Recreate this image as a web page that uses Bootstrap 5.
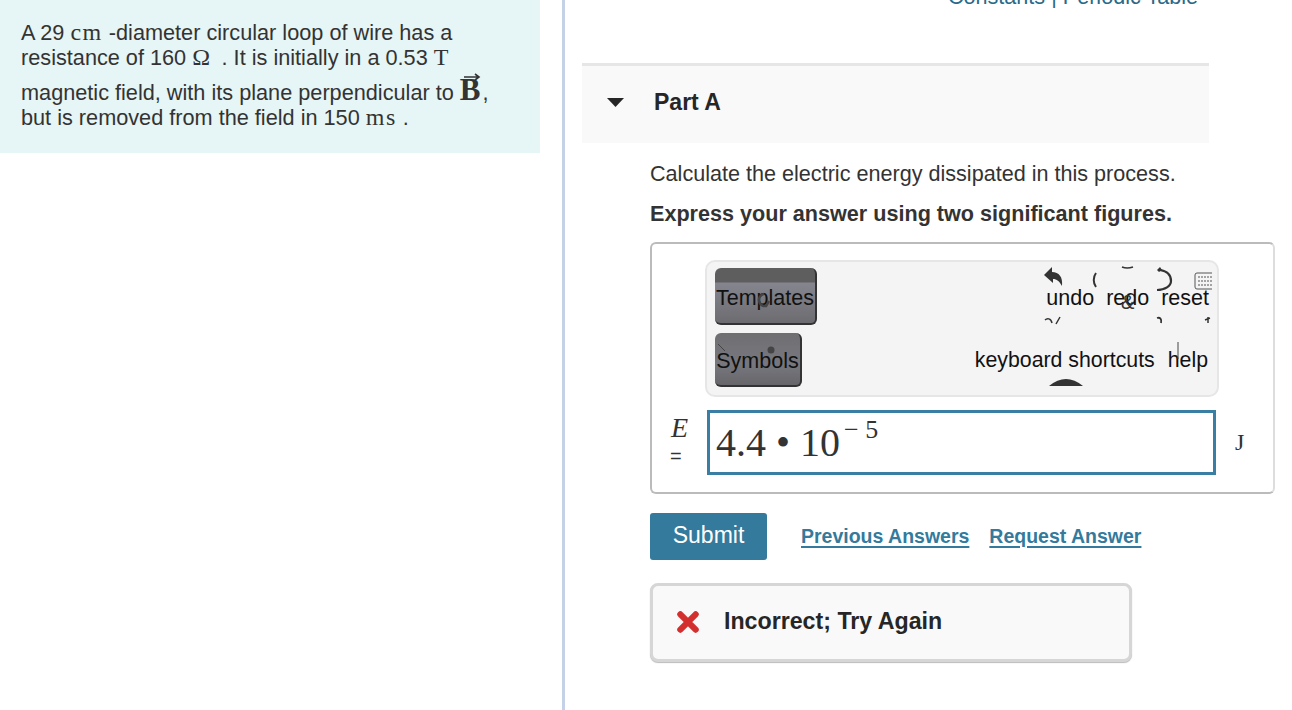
<!DOCTYPE html>
<html lang="en">
<head>
  <meta charset="UTF-8">
  <title>Part A</title>
  <link href="https://cdn.jsdelivr.net/npm/bootstrap@5.3.0/dist/css/bootstrap.min.css" rel="stylesheet">
  <style>
    body {
      font-family: "Liberation Sans", Arial, sans-serif;
      color: #333;
      background: #fff;
      height: 710px;
      overflow: hidden;
    }

    .page-wrap { height: 710px; }

    .left-pane {
      width: 565px;
      flex: none;
      border-right: 3px solid #c5d1e6;
    }

    .intro-box {
      width: 540px;
      height: 153px;
      padding: 20px 21px 0;
      background: #e6f5f5;
      font-size: 21.7px;
      line-height: 25px;
    }

    .intro-box p { margin: 0; }
    .tall-line { display: inline-block; padding-top: 10px; }

    .math { font-family: "Liberation Serif", serif; font-size: 24px; line-height: 0; letter-spacing: 1.5px; }
    .math-o { margin-right: 4px; }
    .math-b { font-family: "Liberation Serif", serif; font-size: 31px; font-weight: 700; line-height: 0; position: relative; letter-spacing: 2px; }
    .math-b svg { position: absolute; left: 3px; top: 1px; }

    .right-pane { width: 727px; padding-left: 17px; }

    .top-links {
      height: 8px;
      width: 616px;
      overflow: hidden;
      text-align: right;
      font-size: 21.6px;
      line-height: 8px;
      color: #2a6a88;
    }
    .top-links span { position: relative; top: -7px; display: block; }

    .part-head {
      width: 627px;
      height: 80px;
      margin-top: 55px;
      padding: 0 0 5px 25px;
      background: #f9f9f9;
      border-top: 3px solid #e6e6e6;
      font-size: 23px;
      font-weight: 700;
      color: #262626;
    }
    .part-head svg { margin-right: 30px; }

    .part-body { padding-left: 68px; font-size: 21.6px; }
    .part-body p { margin: 0; line-height: 24px; }
    .q-text { padding-top: 19px; }
    .q-hint { padding-top: 16px; font-weight: 700; }

    .answer-box {
      width: 625px;
      height: 252px;
      margin-top: 16px;
      padding: 16px 0 0 53px;
      border: 2px solid #bbb;
      border-right-color: #ddd;
      border-radius: 6px;
    }

    .tool-bar {
      position: relative;
      width: 514px;
      height: 137px;
      padding: 6px 0 0 8px;
      background: #f4f4f4;
      border: 2px solid #e6e6e6;
      border-radius: 10px;
      font-size: 21.5px;
      color: #111;
    }
    .tool-row { height: 65px; }
    .tool-btn {
      padding: 0 1px;
      border: 0;
      border-bottom: 2px solid #333;
      border-right: 2px solid #333;
      border-radius: 6px;
      font-size: 21.5px;
      line-height: 1;
      color: #111;
      background: linear-gradient(#6f6f72, #77777f 60%, #66666a);
    }
    .tool-btn:hover { color: #111; }
    .tool-templates {
      width: 102px;
      height: 57px;
      padding-top: 7px;
      background: linear-gradient(#5e5e5e 0, #5e5e5e 14px, #85858f 15px, #6c6c70 100%);
    }
    .tool-symbols { width: 87px; height: 54px; padding-top: 5px; }
    .tool-links { gap: 12px; padding-right: 8px; margin-top: 18px; line-height: 24px; }
    .tool-links-b { gap: 13px; padding-right: 9px; margin-top: 15px; line-height: 24px; font-size: 21.3px; }
    .tool-bits { position: absolute; left: 0; top: 0; pointer-events: none; }

    .eq-row { margin: 13px 0 0 -36px; }
    .eq-label {
      width: 32px;
      flex: none;
      margin-right: 6px;
      padding-left: 2px;
      font-family: "Liberation Serif", serif;
      line-height: 1;
    }
    .eq-label i { display: block; font-size: 28px; margin-top: 4px; letter-spacing: 1px; }
    .eq-label span { display: block; font-size: 20px; margin: 4px 0 0 -1px; color: #333; font-family: "Liberation Sans", sans-serif; }
    .eq-input {
      width: 509px;
      height: 65px;
      padding: 6px 0 0 6px;
      border: 3px solid #3a7fa3;
      font-family: "Liberation Serif", serif;
      font-size: 40px;
      line-height: 48px;
      color: #333;
    }
    .eq-input sup { font-size: 26px; top: -18px; vertical-align: baseline; position: relative; line-height: 0; margin-left: 4px; }
    .eq-unit { font-family: "Liberation Serif", serif; font-size: 24px; margin-left: 19px; margin-top: 14px; }

    .action-row { margin-top: 19px; }
    .btn-submit {
      width: 117px;
      height: 47px;
      padding: 0 0 3px;
      background: #337a9c;
      border: 0;
      border-radius: 3px;
      color: #fff;
      font-size: 23px;
      margin-right: 34px;
    }
    .btn-submit:hover { background: #337a9c; color: #fff; }
    .act-link { color: #337a9c; font-size: 19.5px; font-weight: 700; margin-right: 20px; text-underline-offset: 3px; text-decoration-thickness: 2px; }

    .result-box {
      width: 482px;
      height: 79px;
      margin-top: 23px;
      padding: 0 0 2px 24px;
      background: #f9f9f9;
      border: 3px solid #d6d6d6;
      border-radius: 8px;
      box-shadow: 0 1px 1px #bbb;
      font-size: 23.2px;
      font-weight: 700;
      color: #262626;
    }
    .result-box svg { margin-right: 25px; }
  </style>
</head>
<body>
  <div class="page-wrap d-flex">
    <div class="left-pane">
      <div class="intro-box">
        <p>A 29 <span class="math">cm</span> -diameter circular loop of wire has a<br>
        resistance of 160 <span class="math math-o">&Omega;</span> . It is initially in a 0.53 <span class="math">T</span><br>
        <span class="tall-line">magnetic field, with its plane perpendicular to <span class="math-b">B<svg width="18" height="8" viewBox="0 0 18 8"><path d="M1 4h14M12 1l4 3-4 3" fill="none" stroke="#333" stroke-width="1.6"/></svg></span>,</span><br>
        but is removed from the field in 150 <span class="math">ms</span> .</p>
      </div>
    </div>

    <div class="right-pane">
      <div class="top-links"><span>Constants | Periodic Table</span></div>

      <div class="part-head d-flex align-items-center">
        <svg width="17" height="9" viewBox="0 0 17 9"><path d="M0 0h17L8.500 9z" fill="#262626"/></svg>
        <span>Part A</span>
      </div>

      <div class="part-body">
        <p class="q-text">Calculate the electric energy dissipated in this process.</p>
        <p class="q-hint">Express your answer using two significant figures.</p>

        <div class="answer-box">
          <div class="tool-bar">
            <div class="tool-row d-flex justify-content-between">
              <button class="btn tool-btn tool-templates">Templates</button>
              <div class="tool-links d-flex align-self-start"><span>undo</span><span>redo</span><span>reset</span></div>
            </div>
            <div class="tool-row d-flex justify-content-between">
              <button class="btn tool-btn tool-symbols">Symbols</button>
              <div class="tool-links-b d-flex"><span>keyboard shortcuts</span><span>help</span></div>
            </div>
            <svg class="tool-bits" width="510" height="133" viewBox="0 0 510 133">
              <!-- undo arrow -->
              <path d="M337 13L345 5V10C352 10 356 15 355 24C352 19 350 17 346 17V21Z" fill="#333"/>
              <path d="M389 11c-3 4-3 10 0 14" fill="none" stroke="#333" stroke-width="2"/>
              <path d="M415 5q5 2 11 0" fill="none" stroke="#333" stroke-width="1.500"/>
              <!-- reset arc -->
              <path d="M453 8c7 1 11 5 11 11 0 5-6 9-14 9" fill="none" stroke="#333" stroke-width="2.200"/>
              <path d="M450 8l3-3 2 3-3 2z" fill="#333"/>
              <!-- keyboard, cut off by its own box -->
              <g fill="none" stroke="#555" stroke-width="1">
                <path d="M505 11H490a2 2 0 0 0-2 2V25a2 2 0 0 0 2 2H505"/>
                <path d="M491 15h14M491 19h14M491 23h14" stroke-dasharray="2 1"/>
              </g>
              <path d="M338 58c2-2 6-2 7 3M349 62l4-7" fill="none" stroke="#333" stroke-width="1.500"/>
              <path d="M450 56c3-1 5 1 4 5" fill="none" stroke="#333" stroke-width="1.800"/>
              <path d="M501 55v6M498 58l5-2" fill="none" stroke="#333" stroke-width="1.500"/>
              <path d="M471 80v17" stroke="#444" stroke-width="1"/>
              <path d="M342 124q17-14 34 0z" fill="#333"/>
              <circle cx="64" cy="88" r="3.500" fill="#444"/>
              <path d="M11 82l7 7" stroke="#444" stroke-width="1"/>
              <path d="M57 32a6 6 0 1 0 2 12l3-5" fill="none" stroke="#444" stroke-width="2.500"/>
              <text x="414" y="47" font-family="Liberation Sans" font-size="20" fill="#333">&amp;</text>
            </svg>
          </div>

          <div class="eq-row d-flex">
            <div class="eq-label"><i>E</i><span>=</span></div>
            <div class="eq-input">4.4 &bull; 10<sup>&minus; 5</sup></div>
            <div class="eq-unit">J</div>
          </div>
        </div>

        <div class="action-row d-flex align-items-center">
          <button class="btn btn-submit">Submit</button>
          <a href="#" class="act-link">Previous Answers</a>
          <a href="#" class="act-link">Request Answer</a>
        </div>

        <div class="result-box d-flex align-items-center">
          <svg width="22" height="22" viewBox="0 0 23 23"><path d="M3.500 3.500l16 16M19.500 3.500l-16 16" stroke="#d32f2f" stroke-width="6.500" stroke-linecap="round"/></svg>
          <span>Incorrect; Try Again</span>
        </div>
      </div>
    </div>
  </div>
  <script src="https://cdn.jsdelivr.net/npm/bootstrap@5.3.0/dist/js/bootstrap.bundle.min.js"></script>
</body>
</html>
